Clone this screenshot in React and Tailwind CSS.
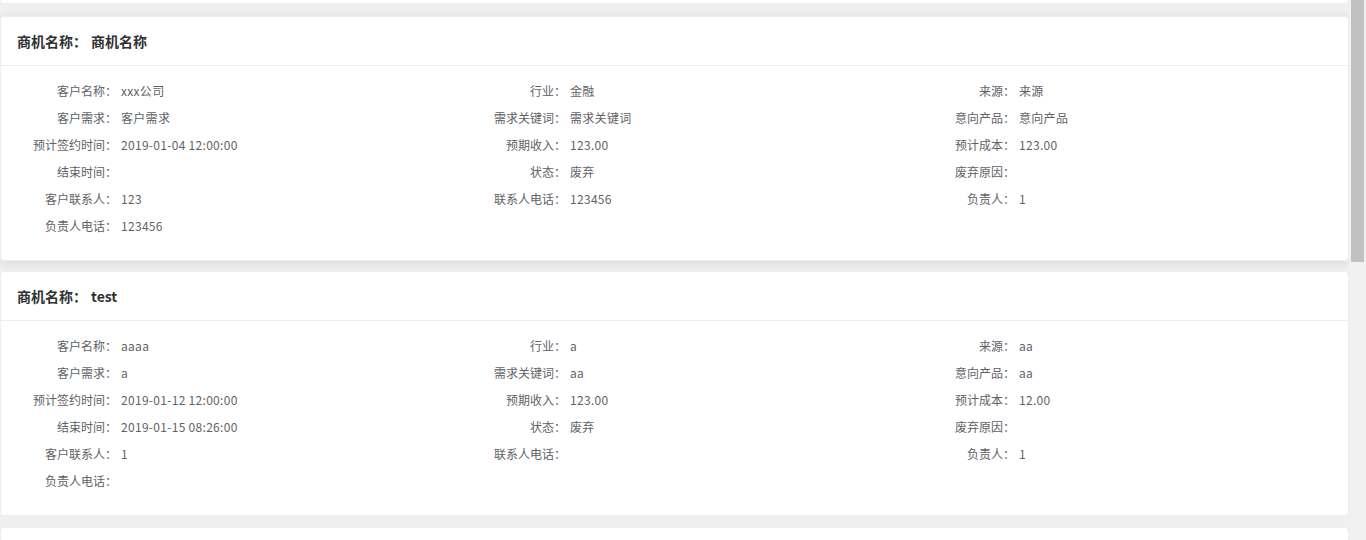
import React from "react";

const cards = [
  {
    title: "商机名称",
    hover: true,
    rows: [
      ["客户名称", "xxx公司", "行业", "金融", "来源", "来源"],
      ["客户需求", "客户需求", "需求关键词", "需求关键词", "意向产品", "意向产品"],
      ["预计签约时间", "2019-01-04 12:00:00", "预期收入", "123.00", "预计成本", "123.00"],
      ["结束时间", "", "状态", "废弃", "废弃原因", ""],
      ["客户联系人", "123", "联系人电话", "123456", "负责人", "1"],
      ["负责人电话", "123456"],
    ],
  },
  {
    title: "test",
    hover: false,
    rows: [
      ["客户名称", "aaaa", "行业", "a", "来源", "aa"],
      ["客户需求", "a", "需求关键词", "aa", "意向产品", "aa"],
      ["预计签约时间", "2019-01-12 12:00:00", "预期收入", "123.00", "预计成本", "12.00"],
      ["结束时间", "2019-01-15 08:26:00", "状态", "废弃", "废弃原因", ""],
      ["客户联系人", "1", "联系人电话", "", "负责人", "1"],
      ["负责人电话", ""],
    ],
  },
];

function Field({ label, value }) {
  return (
    <div className="flex h-[27px] items-center">
      <div className="w-[120px] shrink-0 pr-[4px] text-right text-[#606266]">{label}：</div>
      <div className="tracking-[0.3px] text-[#606266]">{value}</div>
    </div>
  );
}

function Card({ card }) {
  const cells = [];
  card.rows.forEach((r) => {
    for (let i = 0; i < r.length; i += 2) cells.push([r[i], r[i + 1]]);
  });
  return (
    <div
      className={
        "rounded-[4px] border border-[#ebeef5] bg-white " +
        (card.hover ? "shadow-[0_2px_12px_0_rgba(0,0,0,0.1)]" : "")
      }
    >
      <div className="flex h-[49px] items-center border-b border-[#ebeef5] pl-4 text-[14px] font-bold text-[#303133]">
        <span>商机名称：</span>
        <span className="ml-1">{card.title}</span>
      </div>
      <div className="grid grid-cols-3 pt-[11px] pb-[21px] text-[12px]">
        {cells.map((c, i) => (
          <Field key={i} label={c[0]} value={c[1]} />
        ))}
      </div>
    </div>
  );
}

export default function App() {
  return (
    <div
      className="flex h-[540px] w-[1366px] overflow-hidden bg-[#f0f0f0]"
      style={{ fontFamily: '"Microsoft YaHei", "Noto Sans CJK SC", sans-serif' }}
    >
      <div className="flex w-[1349px] flex-col">
        <div className="h-[4px] shrink-0 rounded-b-[4px] border-x border-b border-[#ebeef5] bg-white" />
        <div className="mt-[12px]">
          <Card card={cards[0]} />
        </div>
        <div className="mt-[10px]">
          <Card card={cards[1]} />
        </div>
        <div className="mt-[11px] h-[40px] shrink-0 rounded-t-[4px] border border-[#ebeef5] bg-white" />
      </div>
      <div className="flex w-[17px] flex-col bg-[#f1f1f1] pl-[2px] pr-[2px]">
        <div className="h-[262px] w-[13px] bg-[#c1c1c1]" />
      </div>
    </div>
  );
}
